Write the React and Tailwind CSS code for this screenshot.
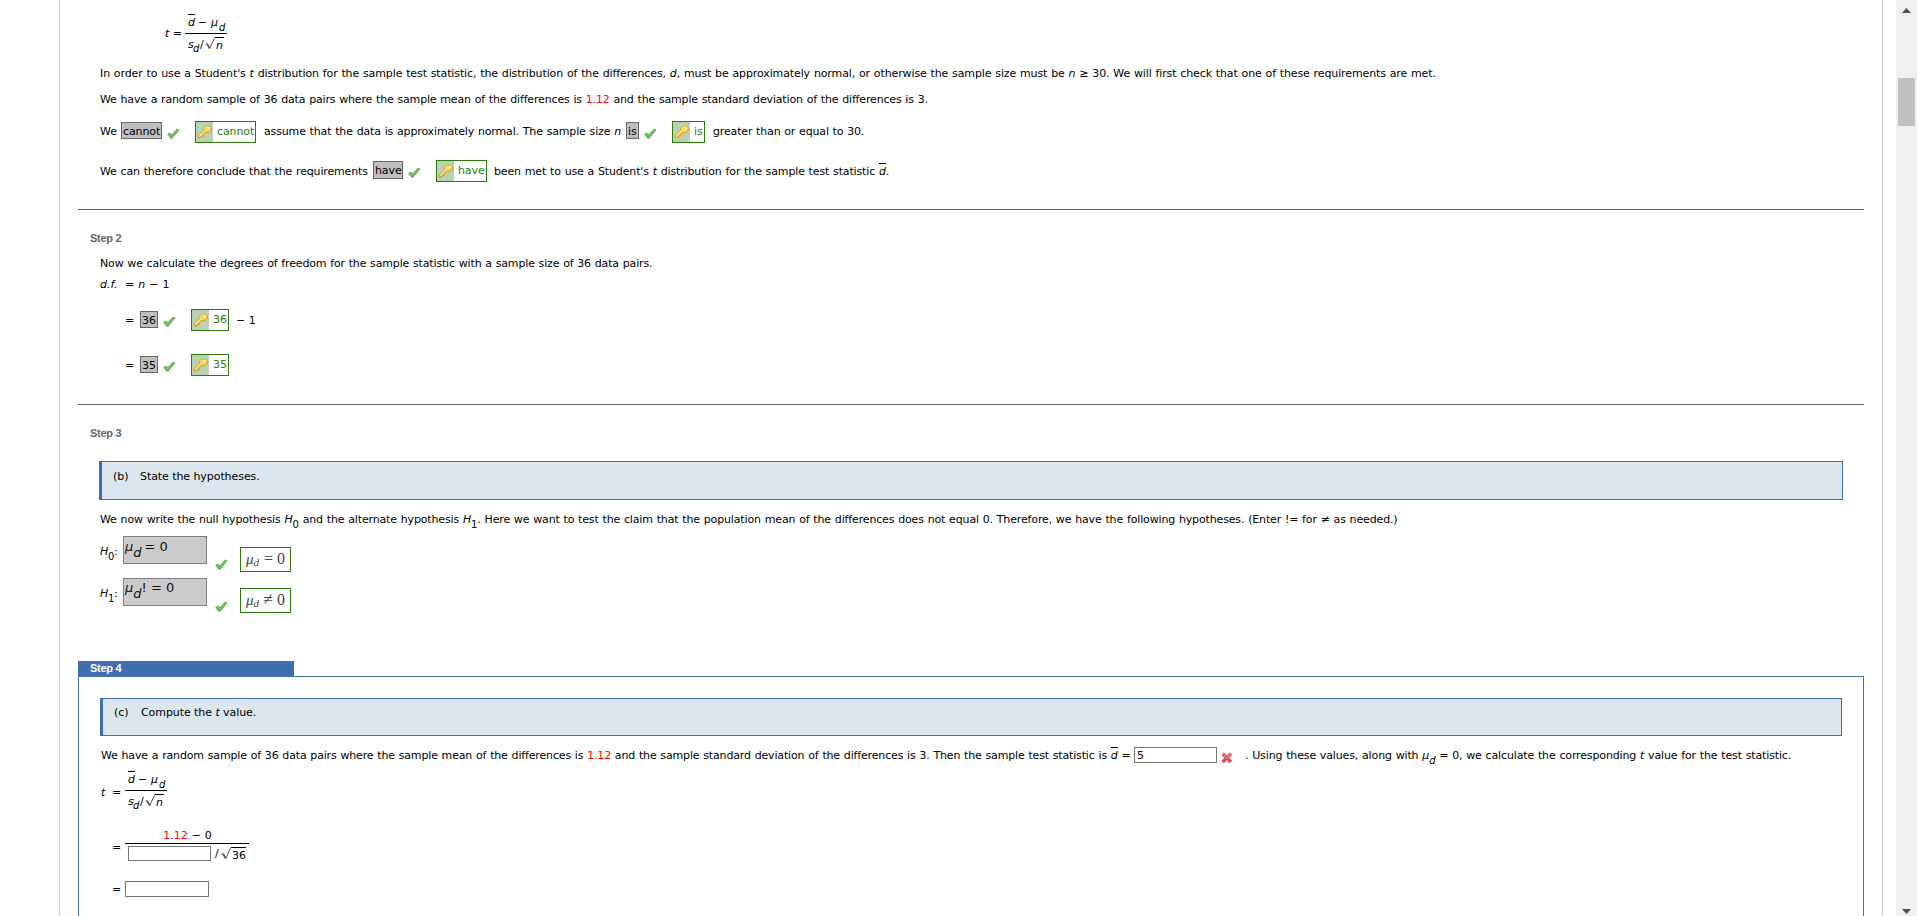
import clsx from "clsx";

const Text = ({ className, children }) => (
    <span className={clsx("block shrink-0 whitespace-pre leading-[18px]", className)}>{children}</span>
);

const Sub = ({ children, className }) => (
    <span className={clsx("relative top-[5px] text-[10px]", className)}>{children}</span>
);

const Check = ({ className }) => (
    <svg className={clsx("block shrink-0", className)} width="13" height="12" viewBox="0 0 13 12">
        <path d="M0.2 6.2 L2.6 4.4 L4.8 6.2 L10 0.6 L12.6 2 L5 10.8 L3.8 10.8 Z" fill="#62a954" />
        <path d="M1.2 6 L2.6 5.2 L4.8 7.4 L10.2 1.4 L11.4 2.1 L4.6 9.2 Z" fill="#85c873" />
    </svg>
);

const Cross = ({ className }) => (
    <svg className={clsx("block shrink-0", className)} width="12" height="12" viewBox="0 0 12 12">
        <path d="M1.6 1.6 L10 10 M10 1.6 L1.6 10" stroke="#e5474f" strokeWidth="3.4" />
        <path d="M2 2 L5.8 5.8 L9.6 2" stroke="#f07a7e" strokeWidth="1.4" fill="none" />
    </svg>
);

const KeyIcon = () => (
    <svg className="block" width="17" height="20" viewBox="0 0 17 20">
        <path d="M3.6 14.6 L9.6 8.6" stroke="#d9a032" strokeWidth="3.8" strokeLinecap="round" />
        <path d="M6 13.8 L7.6 14.2" stroke="#d9a032" strokeWidth="2.4" />
        <ellipse cx="11.6" cy="7.3" rx="4.4" ry="3.9" fill="#dba336" />
        <path d="M3.8 14 L9.8 8" stroke="#fbe06d" strokeWidth="2" strokeLinecap="round" />
        <ellipse cx="11.4" cy="7" rx="3.3" ry="2.8" fill="#f9dc66" />
        <circle cx="13.1" cy="6" r="1" fill="#fff6c4" />
    </svg>
);

const Answer = ({ className, children }) => (
    <span className={clsx("block shrink-0 whitespace-pre border border-[#666] bg-[#bfbfbf] pl-px pt-px leading-[15px] tracking-[-0.1px]", className)}>
        {children}
    </span>
);

const KeyBox = ({ className, children }) => (
    <span className={clsx("flex h-[22px] shrink-0 border border-[#2b7a0b] bg-white text-[#2b7a0b]", className)}>
        <span className="w-[17px] shrink-0 bg-[#b9d1b4]">
            <KeyIcon />
        </span>
        <span className="whitespace-pre pl-1 leading-5 tracking-[-0.1px]">{children}</span>
    </span>
);

const Root = () => (
    <svg className="block shrink-0" width="10" height="14" viewBox="0 0 10 14">
        <path d="M0.5 7.5 L2.2 6.5 L4.8 11.5 L9.8 0.5" stroke="#555" strokeWidth="1" fill="none" />
        <path d="M2.2 7 L4.6 11.4" stroke="#555" strokeWidth="1.6" fill="none" />
    </svg>
);

const DBar = () => (
    <span className="inline-block border-t border-black leading-[15px] italic">d</span>
);

const Formula = () => (
    <div className="w-[42px] shrink-0">
        <div className="flex h-5 border-b border-black pl-[3px]">
            <span className="h-4 w-[7px] border-t border-black pt-px leading-[13px] italic">d</span>
            <Text className="w-4 pl-[3px]">−</Text>
            <Text className="w-2 italic">μ</Text>
            <Text className="pt-[5px] text-[10px] italic">d</Text>
        </div>
        <div className="flex pl-[3px] pt-[3px]">
            <Text className="-mt-px w-[5px] italic">s</Text>
            <Text className="w-[6px] pt-[3px] text-[10px] italic">d</Text>
            <Text className="-mt-px w-[6px] pl-px">/</Text>
            <Root />
            <span className="h-4 w-[9px] border-t border-black pl-px leading-[15px] italic">n</span>
        </div>
    </div>
);

const StepTitle = ({ className, children }) => (
    <div className={clsx("font-['Liberation_Sans',sans-serif] text-[11px] font-bold tracking-[-0.3px]", className)}>
        {children}
    </div>
);

const Panel = ({ className, label, children }) => (
    <div className={clsx("flex border border-l-3 border-[#3f6eae] bg-[#dce6ee] pl-[11px]", className)}>
        <Text className="w-[27px]">{label}</Text>
        <Text className="tracking-[-0.07px]">{children}</Text>
    </div>
);

const MathAnswer = ({ className, children }) => (
    <span className={clsx("h-7 w-[84px] whitespace-pre border border-[#808080] bg-[#cbcbcb] pl-px text-[13px] text-[#111]", className)}>
        <i>μ</i><span className="relative top-[6px] italic">d</span>{children}
    </span>
);

const MathKey = ({ className, children }) => (
    <span className={clsx("ml-3 h-[25px] w-[51px] whitespace-pre border border-[#2b7a0b] pl-[5px] font-['Liberation_Serif',serif] text-[16px] leading-[22px] text-[#444]", className)}>
        <span className="text-[15px] italic">μ</span><span className="relative top-[2px] text-[11px] italic">d</span>{children}
    </span>
);

const Scrollbar = () => (
    <div className="flex w-[21px] shrink-0 flex-col items-center justify-between bg-[#f0f0f0]">
        <div className="flex flex-col items-center">
            <svg className="mt-2 block" width="9" height="5" viewBox="0 0 9 5">
                <path d="M4.5 0 L9 5 H0 Z" fill="#505050" />
            </svg>
            <div className="mt-[65px] h-12 w-[17px] bg-[#c1c1c1]" />
        </div>
        <svg className="mb-[2px] block" width="9" height="5" viewBox="0 0 9 5">
            <path d="M0 0 H9 L4.5 5 Z" fill="#505050" />
        </svg>
    </div>
);

const Field = ({ className, children }) => (
    <span className={clsx("block shrink-0 border border-[#767676] bg-white pl-[2px]", className)}>{children}</span>
);

const App = () => {
    return (
        <div className="flex h-[916px] overflow-hidden bg-white font-['DejaVu_Sans',sans-serif] text-[11px] text-black">
            <div className="ml-[59px] w-[1824px] shrink-0 border-x border-[#ccc] pl-[18px]">
                <div className="flex h-[65px] pl-[87px] pt-[14px]">
                    <Text className="w-5 pt-[11px]"><i>t</i> =</Text>
                    <Formula />
                </div>
                <div className="h-[26px] pl-[22px]">
                    <Text className="tracking-[-0.118px] [word-spacing:0.5px]">In order to use a Student's <i>t</i> distribution for the sample test statistic, the distribution of the differences, <i>d</i>, must be approximately normal, or otherwise the sample size must be <i>n</i> ≥ 30. We will first check that one of these requirements are met.</Text>
                </div>
                <div className="h-[26px] pl-[22px]">
                    <Text className="tracking-[-0.16px] [word-spacing:0.5px]">We have a random sample of 36 data pairs where the sample mean of the differences is <span className="text-[#f00]">1.12</span> and the sample standard deviation of the differences is 3.</Text>
                </div>
                <div className="flex h-10 pl-[22px]">
                    <Text className="mt-[6px] w-[21px]">We</Text>
                    <Answer className="mt-[5px] h-[17px] w-[41px]">cannot</Answer>
                    <Check className="ml-[5px] mt-[11px]" />
                    <KeyBox className="ml-[15px] mt-1 w-[61px]">cannot</KeyBox>
                    <Text className="ml-2 mt-[6px] w-[362px] tracking-[-0.15px] [word-spacing:0.5px]">assume that the data is approximately normal. The sample size <i>n</i></Text>
                    <Answer className="mt-[5px] h-[17px] w-[13px]">is</Answer>
                    <Check className="ml-[5px] mt-[11px]" />
                    <KeyBox className="ml-[15px] mt-1 w-[33px]">is</KeyBox>
                    <Text className="ml-2 mt-[6px] tracking-[-0.16px] [word-spacing:0.5px]">greater than or equal to 30.</Text>
                </div>
                <div className="flex h-[52px] pl-[22px]">
                    <Text className="mt-[6px] w-[273px] tracking-[-0.155px] [word-spacing:0.5px]">We can therefore conclude that the requirements</Text>
                    <Answer className="mt-1 h-[18px] w-[30px]">have</Answer>
                    <Check className="ml-[5px] mt-[10px]" />
                    <KeyBox className="ml-[15px] mt-[3px] w-[51px]">have</KeyBox>
                    <Text className="ml-[7px] mt-[6px] tracking-[-0.14px] [word-spacing:0.5px]">been met to use a Student's <i>t</i> distribution for the sample test statistic <DBar />.</Text>
                </div>
                <div className="h-px w-[1786px] bg-[#666]" />

                <StepTitle className="mt-5 pl-3 leading-4 text-[#666]">Step 2</StepTitle>
                <div className="mt-[9px] h-[21px] pl-[22px]">
                    <Text className="tracking-[-0.157px] [word-spacing:0.5px]">Now we calculate the degrees of freedom for the sample statistic with a sample size of 36 data pairs.</Text>
                </div>
                <div className="flex h-[33px] pl-[22px]">
                    <Text className="w-[25px] italic">d.f.</Text>
                    <Text className="[word-spacing:0.5px]">= <i>n</i> − 1</Text>
                </div>
                <div className="flex h-[45px] pl-[47px]">
                    <Text className="mt-[3px] w-[15px]">=</Text>
                    <Answer className="mt-[2px] h-[17px] w-[18px]">36</Answer>
                    <Check className="ml-[5px] mt-[7px]" />
                    <KeyBox className="ml-[15px] w-[38px]">36</KeyBox>
                    <Text className="ml-[7px] mt-[3px]">− 1</Text>
                </div>
                <div className="flex h-[50px] pl-[47px]">
                    <Text className="mt-[3px] w-[15px]">=</Text>
                    <Answer className="mt-[2px] h-[17px] w-[18px]">35</Answer>
                    <Check className="ml-[5px] mt-[7px]" />
                    <KeyBox className="ml-[15px] w-[38px]">35</KeyBox>
                </div>
                <div className="h-px w-[1786px] bg-[#666]" />

                <StepTitle className="mt-5 pl-3 leading-4 text-[#666]">Step 3</StepTitle>
                <Panel className="ml-[21px] mt-5 h-[39px] w-[1744px] pt-[6px]" label="(b)">State the hypotheses.</Panel>
                <div className="mt-[11px] h-[25px] pl-[22px]">
                    <Text className="tracking-[-0.145px] [word-spacing:0.5px]">We now write the null hypothesis <i>H</i><Sub>0</Sub> and the alternate hypothesis <i>H</i><Sub>1</Sub>. Here we want to test the claim that the population mean of the differences does not equal 0. Therefore, we have the following hypotheses. (Enter != for ≠ as needed.)</Text>
                </div>
                <div className="flex h-[42px] pl-[22px]">
                    <Text className="mt-[7px] w-[23px] tracking-[-0.2px]"><i>H</i><Sub>0</Sub>:</Text>
                    <MathAnswer className="leading-5"><span className="ml-[3px]">= 0</span></MathAnswer>
                    <Check className="ml-2 mt-[23px]" />
                    <MathKey className="mt-[11px]"><span className="ml-[5px]">= 0</span></MathKey>
                </div>
                <div className="flex h-[83px] pl-[22px]">
                    <Text className="mt-[7px] w-[23px] tracking-[-0.2px]"><i>H</i><Sub>1</Sub>:</Text>
                    <MathAnswer className="leading-[18px]">! = 0</MathAnswer>
                    <Check className="ml-2 mt-[23px]" />
                    <MathKey className="mt-[10px]">
                        <span className="ml-1 text-[18px] leading-4">≠</span><span className="ml-1">0</span>
                    </MathKey>
                </div>

                <div className="h-[15px] w-[216px] bg-[#3f6eae] pl-3">
                    <StepTitle className="leading-[15px] text-white">Step 4</StepTitle>
                </div>
                <div className="h-[260px] w-[1786px] border border-[#3f6eae] pt-[21px]">
                    <Panel className="ml-[21px] h-[38px] w-[1742px] pt-[5px]" label="(c)">Compute the <i>t</i> value.</Panel>
                    <div className="mt-[11px] flex h-[24px] pl-[22px]">
                        <Text className="w-[1033px] tracking-[-0.155px] [word-spacing:0.5px]">We have a random sample of 36 data pairs where the sample mean of the differences is <span className="text-[#f00]">1.12</span> and the sample standard deviation of the differences is 3. Then the sample test statistic is <DBar /> =</Text>
                        <Field className="h-4 w-[83px] leading-[15px]">5</Field>
                        <Cross className="ml-1 mt-[5px]" />
                        <Text className="ml-[12px] tracking-[-0.14px] [word-spacing:0.5px]">. Using these values, along with <i>μ</i><Sub className="italic">d</Sub> = 0, we calculate the corresponding <i>t</i> value for the test statistic.</Text>
                    </div>
                    <div className="flex h-[56px] pl-[22px]">
                        <Text className="w-[11px] pt-[13px] italic">t</Text>
                        <Text className="w-[13px] pt-[13px]">=</Text>
                        <Formula />
                    </div>
                    <div className="flex h-[54px] pl-[33px]">
                        <Text className="w-[13px] pt-3">=</Text>
                        <div className="w-[124px]">
                            <div className="flex h-[17px] justify-center border-b border-black pl-px [word-spacing:0.5px]">
                                <Text><span className="text-[#f00]">1.12</span> − 0</Text>
                            </div>
                            <div className="flex pl-[3px] pt-[2px]">
                                <Field className="h-[15px] w-[83px]" />
                                <Text className="-mt-px w-[10px] pl-1">/</Text>
                                <div className="pt-px">
                                    <Root />
                                </div>
                                <span className="mt-px h-4 w-[15px] border-t border-black pl-px leading-[15px]">36</span>
                            </div>
                        </div>
                    </div>
                    <div className="flex pl-[33px]">
                        <Text className="w-[13px]">=</Text>
                        <Field className="h-4 w-[84px]" />
                    </div>
                </div>
            </div>
            <div className="ml-[13px] flex h-full">
                <Scrollbar />
            </div>
        </div>
    );
};

export default App;
